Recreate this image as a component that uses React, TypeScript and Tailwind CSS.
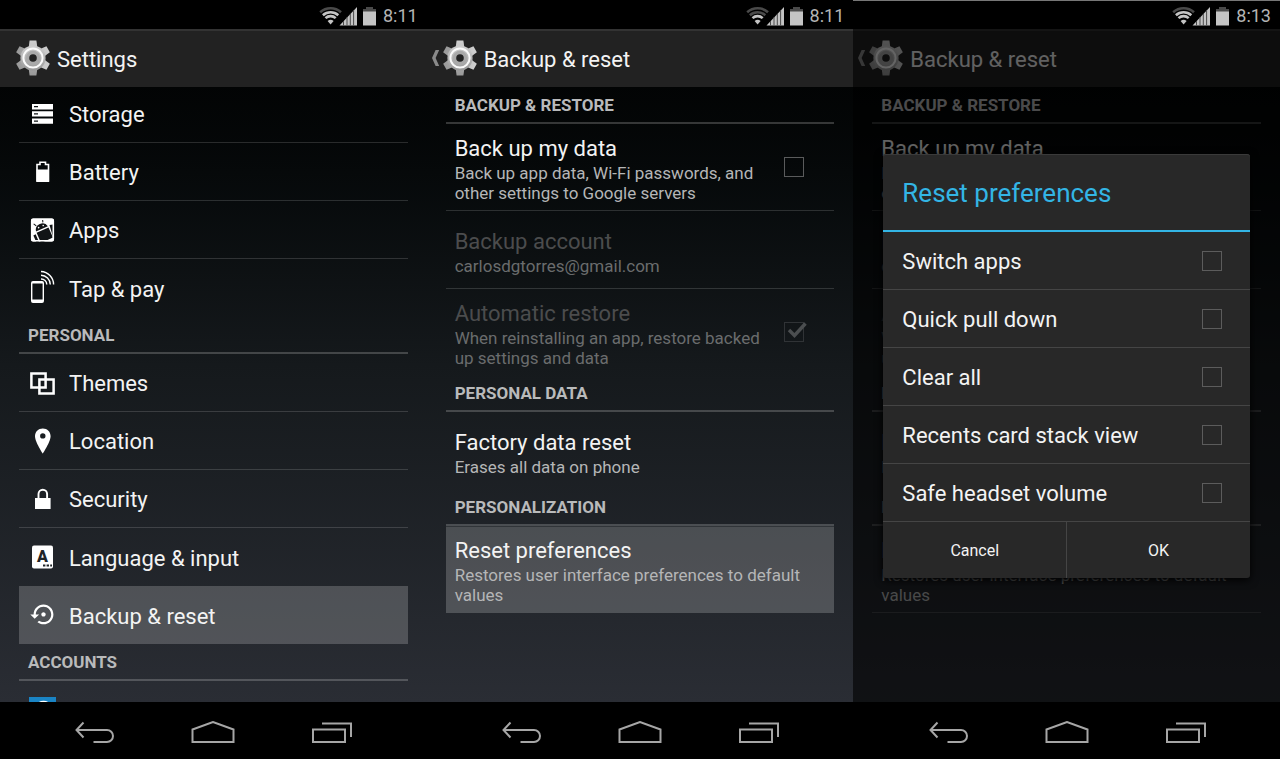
import { ReactNode } from "react";
import clsx from "clsx";

type WifiLevel = "weak" | "strong";

function StatusBar({ time, wifi }: { time: string; wifi: WifiLevel }) {
  return (
    <div className="flex h-[29px] shrink-0 items-center justify-end gap-[6px] bg-black pt-[2px] pr-[9px]">
      <svg width="58" height="20" viewBox="0 0 58 20" aria-hidden="true">
        <g fill="none" strokeWidth="2.6">
          <path d="M1.2 6.2 A15.5 15.5 0 0 1 22 6.2" stroke="#4a4a4a" />
          <path d="M3.9 9.2 A11.5 11.5 0 0 1 19.3 9.2" stroke={wifi === "strong" ? "#c4c4c4" : "#4a4a4a"} />
          <path d="M6.5 12.1 A7.6 7.6 0 0 1 16.7 12.1" stroke="#c4c4c4" />
        </g>
        <path d="M11.6 18.6 L8.6 15 A4.6 4.6 0 0 1 14.6 15 Z" fill="#c4c4c4" />
        <path d="M38 1 V19.5 H20.5 Z" fill="#c4c4c4" />
        <path d="M24.5 15 V19.5 M28 11 V19.5 M31.3 8 V19.5 M34.6 4 V19.5" stroke="#4c4c4c" strokeWidth="1" />
        <path d="M47 1 H54 V3 H57 V6 H44 V3 H47 Z" fill="#4a4a4a" />
        <path d="M44 5.5 H57 V19.5 H44 Z" fill="#c4c4c4" />
      </svg>
      <span className="text-[18px] leading-6 text-[#b4b4b4]">{time}</span>
    </div>
  );
}

function Gear() {
  return (
    <svg width="34" height="36" viewBox="-17 -18 34 36" className="shrink-0" aria-hidden="true">
      <defs>
        <linearGradient id="gearBody" x1="0" y1="0" x2="0" y2="1">
          <stop offset="0" stopColor="#cfcfcf" />
          <stop offset="1" stopColor="#999999" />
        </linearGradient>
      </defs>
      <g fill="url(#gearBody)">
        {[0, 60, 120].map((angle) => (
          <path key={angle} d="M-3.4 -17.5 H3.4 L4.4 -10 V10 L3.4 17.5 H-3.4 L-4.4 10 V-10 Z" transform={`rotate(${angle})`} />
        ))}
        <circle r="12.6" />
      </g>
      <circle r="7.2" fill="#a9a9a9" />
      <circle r="9.6" fill="none" stroke="#fafafa" strokeWidth="2" />
      <circle r="3.8" fill="#222222" />
    </svg>
  );
}

function ActionBar({ title, back }: { title: string; back?: boolean }) {
  return (
    <header className="flex h-[58px] shrink-0 items-center border-t-2 border-[#333333] bg-[#222222] pl-[4px]">
      <button type="button" aria-label="Navigate up" disabled={!back} className="flex items-center pb-[2px]">
        <span className="w-[12px]">
          {back && (
            <svg width="9" height="18" viewBox="0 0 9 18" aria-hidden="true">
              <path d="M4.6 1 H8.2 L4.6 9 L8.2 17 H4.6 L1 9 Z" fill="#8a8a8a" />
            </svg>
          )}
        </span>
        <Gear />
      </button>
      <h1 className="ml-[7px] text-[22px] text-[#f3f3f3]">{title}</h1>
    </header>
  );
}

function NavBar() {
  return (
    <nav className="flex h-[57px] shrink-0 items-center justify-center bg-black pt-[5px]">
      <button type="button" aria-label="Back" className="flex w-[120px] justify-center">
        <svg width="40" height="24" viewBox="0 0 40 24" fill="none" stroke="#a6a6a6" strokeWidth="2">
          <path d="M9.5 1.5 L2.5 9 L9.5 16.5 M3 9 H33 A6 6 0 0 1 33 21 H19.5" />
        </svg>
      </button>
      <button type="button" aria-label="Home" className="flex w-[118px] justify-center">
        <svg width="44" height="24" viewBox="0 0 44 24" fill="none" stroke="#a6a6a6" strokeWidth="2">
          <path d="M1.5 21 V8.5 L22 1 L42.5 8.5 V21 Z" />
        </svg>
      </button>
      <button type="button" aria-label="Recent apps" className="flex w-[120px] justify-center">
        <svg width="40" height="24" viewBox="0 0 40 24" fill="none" stroke="#a6a6a6" strokeWidth="2">
          <path d="M1 8.5 H33 V21 H1 Z M10 2.5 H39 V16" />
        </svg>
      </button>
    </nav>
  );
}

function SectionHeader({ children }: { children: ReactNode }) {
  return (
    <h2 className="flex h-[37px] items-center border-b-2 border-white/20 pt-[3px] pl-[9px] text-[17px] font-bold text-[#b9babb]">
      {children}
    </h2>
  );
}

const icons: Record<string, ReactNode> = {
  storage: (
    <>
      <path d="M3 4 H24 V9.4 H3 Z M3 11.2 H24 V16.6 H3 Z M3 18.4 H24 V23.8 H3 Z" />
      <path d="M5 6.7 H9 M5 13.9 H9 M5 21.1 H9" stroke="#111416" strokeWidth="1.2" />
    </>
  ),
  battery: (
    <>
      <path d="M8 23 V6.5 H11 V4.2 H16.5 V6.5 H19.5 V23 Z" fill="none" stroke="white" strokeWidth="1.6" />
      <path d="M7.5 11.5 H20 V24 H7.5 Z" />
    </>
  ),
  apps: (
    <>
      <rect x="2" y="2.5" width="23" height="23" rx="2" />
      <g transform="rotate(-24 14 14)" fill="#111416">
        <path d="M7 12.5 A6.6 6.4 0 0 1 20 12.5 Z" />
        <path d="M7 14 H20 V25 H7 Z M3 15 H5.5 V23 H3 Z" />
        <path d="M9.5 7.5 L8 4.5 M17 7 L18 4" stroke="#111416" />
        <circle cx="11" cy="10" r="0.8" fill="white" />
        <circle cx="16" cy="10" r="0.8" fill="white" />
      </g>
      <path d="M20.5 9 L24 8.5 V21 Z" fill="#111416" />
      <rect x="2.7" y="3.2" width="21.6" height="21.6" rx="1.5" fill="none" stroke="white" strokeWidth="1.6" />
    </>
  ),
  tap: (
    <>
      <path
        fillRule="evenodd"
        d="M4 7 H13 Q15 7 15 9 V27 Q15 29 13 29 H4 Q2 29 2 27 V9 Q2 7 4 7 Z M3.4 9.5 V25.5 H13.6 V9.5 Z"
      />
      <path
        d="M12 -2.5 A13 13 0 0 1 24.6 10.5 M12 1.2 A9.4 9.4 0 0 1 21.3 10.5 M12 5 A5.6 5.6 0 0 1 17.8 10.5"
        fill="none"
        stroke="white"
        strokeWidth="1.4"
      />
    </>
  ),
  themes: (
    <path d="M2.4 4.4 H16.6 V18.6 H2.4 Z M10.4 10.4 H24.6 V24.6 H10.4 Z" fill="none" stroke="white" strokeWidth="2.5" />
  ),
  location: (
    <path
      fillRule="evenodd"
      d="M13.8 1.5 C9.3 1.5 6 4.9 6 9.2 C6 14.8 13.8 26.5 13.8 26.5 C13.8 26.5 21.6 14.8 21.6 9.2 C21.6 4.9 18.3 1.5 13.8 1.5 Z M13.8 6.2 A2.7 2.7 0 1 1 13.8 11.6 A2.7 2.7 0 1 1 13.8 6.2 Z"
    />
  ),
  security: (
    <>
      <path d="M9.5 13.5 V9 A4.3 4.3 0 0 1 18.1 9 V13.5" fill="none" stroke="white" strokeWidth="1.9" />
      <path d="M6 13 H21.6 V24 H6 Z" />
    </>
  ),
  language: (
    <>
      <rect x="3" y="2.5" width="21" height="23" rx="2" />
      <text x="13.5" y="19" textAnchor="middle" fontSize="16" fontWeight="900" fill="#1f2428">
        A
      </text>
      <path d="M14 22.5 H16.4 M17.6 22.5 H20 M21.2 22.5 H23" stroke="#1f2428" strokeWidth="2" />
    </>
  ),
  backup: (
    <path
      transform="translate(1.3 .2) scale(1.1)"
      d="M14 12c0-1.1-.9-2-2-2s-2 .9-2 2 .9 2 2 2 2-.9 2-2zm-2-9c-4.97 0-9 4.03-9 9H0l4 4 4-4H5c0-3.87 3.13-7 7-7s7 3.13 7 7-3.13 7-7 7c-1.51 0-2.91-.49-4.06-1.3l-1.42 1.44C8.04 20.3 9.94 21 12 21c4.97 0 9-4.03 9-9s-4.03-9-9-9z"
    />
  ),
};

function SettingsRow({ icon, label, last, active }: { icon: string; label: string; last?: boolean; active?: boolean }) {
  return (
    <button
      type="button"
      className={clsx(
        "flex h-[58px] w-full shrink-0 items-center gap-[12px] pl-[10px] text-left text-[22px] text-[#f3f3f3]",
        active && "bg-white/20",
        !last && "border-b border-white/15",
      )}
    >
      <svg width="28" height="28" viewBox="0 0 28 28" fill="white" className="shrink-0 overflow-visible" aria-hidden="true">
        {icons[icon]}
      </svg>
      <span className="pt-[2px]">{label}</span>
    </button>
  );
}

const tickBox = "size-[20px] shrink-0 appearance-none border";

type PreferenceProps = {
  title: string;
  summary: string;
  checkbox?: "on" | "off";
  disabled?: boolean;
  active?: boolean;
  divider?: boolean;
};

function Preference({ title, summary, checkbox, disabled, active, divider }: PreferenceProps) {
  const Row = checkbox ? "label" : "button";
  return (
    <Row
      className={clsx(
        "flex w-full items-center justify-between gap-[12px] pr-[30px] pl-[9px] text-left",
        active && "bg-white/20 shadow-[inset_0_1px_#303438]",
        divider && "border-b",
        active ? "border-transparent" : "border-white/15",
      )}
    >
      <span className="flex min-h-[77px] flex-col justify-center pt-[10px] pb-[7px]">
        <span className={clsx("text-[22px] leading-[29px]", disabled ? "text-[#4b4c4d]" : "text-[#f3f3f3]")}>{title}</span>
        <span className={clsx("text-[17px] leading-[20px]", disabled ? "text-[#6a6c6d]" : "text-[#b5b6b7]")}>{summary}</span>
      </span>
      {checkbox && (
        <span className="relative flex shrink-0">
          <input
            type="checkbox"
            defaultChecked={checkbox === "on"}
            disabled={disabled}
            className={clsx(tickBox, "peer", disabled ? "border-[#303336]" : "border-[#5a5b5c]")}
          />
          <svg
            width="24"
            height="20"
            viewBox="0 0 24 20"
            className="pointer-events-none absolute top-0 left-0 hidden peer-checked:block"
            aria-hidden="true"
          >
            <path d="M5 8 L10.5 13.5 L21.5 1.5" fill="none" stroke="#4b4e50" strokeWidth="3.4" />
          </svg>
        </span>
      )}
    </Row>
  );
}

function BackupPreferences({ active }: { active?: boolean }) {
  return (
    <main className="min-h-0 flex-1 overflow-hidden px-[19px]">
      <SectionHeader>BACKUP &amp; RESTORE</SectionHeader>
      <Preference
        title="Back up my data"
        summary="Back up app data, Wi-Fi passwords, and other settings to Google servers"
        checkbox="off"
        divider
      />
      <Preference title="Backup account" summary="carlosdgtorres@gmail.com" disabled divider />
      <Preference
        title="Automatic restore"
        summary="When reinstalling an app, restore backed up settings and data"
        checkbox="on"
        disabled
      />
      <SectionHeader>PERSONAL DATA</SectionHeader>
      <Preference title="Factory data reset" summary="Erases all data on phone" />
      <SectionHeader>PERSONALIZATION</SectionHeader>
      <Preference
        title="Reset preferences"
        summary="Restores user interface preferences to default values"
        active={active}
        divider
      />
    </main>
  );
}

const RESET_OPTIONS = ["Switch apps", "Quick pull down", "Clear all", "Recents card stack view", "Safe headset volume"];

function ResetDialog() {
  return (
    <div className="absolute inset-0 flex items-center bg-black/60 px-[30px]">
      <div
        role="dialog"
        aria-labelledby="reset-title"
        className="w-full rounded-[3px] bg-[#282828] shadow-[0_2px_8px_#000000,inset_0_1px_#3a3a3a]"
      >
        <h2
          id="reset-title"
          className="flex h-[78px] items-center border-b-2 border-[#33b5e5] pt-[4px] pl-[19px] text-[26px] text-[#33b5e5]"
        >
          Reset preferences
        </h2>
        {RESET_OPTIONS.map((option) => (
          <label
            key={option}
            className="flex h-[58px] items-center justify-between border-b border-[#454545] pt-[2px] pr-[28px] pl-[19px] text-[22px] text-[#f3f3f3]"
          >
            {option}
            <input type="checkbox" className={clsx(tickBox, "border-[#5c5c5c] checked:bg-[#33b5e5]")} />
          </label>
        ))}
        <div className="flex h-[56px] text-[16px] text-[#f3f3f3]">
          <button type="button" className="flex-1 border-r border-[#454545] pt-[2px]">
            Cancel
          </button>
          <button type="button" className="flex-1 pt-[2px]">
            OK
          </button>
        </div>
      </div>
    </div>
  );
}

function Phone({ children }: { children: ReactNode }) {
  return <section className="flex min-w-0 flex-col overflow-hidden">{children}</section>;
}

const screen = "relative flex min-h-0 flex-1 flex-col bg-linear-to-b from-[#010202] via-[#15191c] to-[#2a2d34]";

export default function App() {
  return (
    <div className="grid h-screen grid-cols-3 bg-black font-[Roboto,sans-serif]">
      <Phone>
        <StatusBar time="8:11" wifi="strong" />
        <div className={screen}>
          <ActionBar title="Settings" />
          <main className="min-h-0 flex-1 overflow-hidden px-[19px]">
            <div className="-mt-[2px]">
              <SettingsRow icon="storage" label="Storage" />
              <SettingsRow icon="battery" label="Battery" />
              <SettingsRow icon="apps" label="Apps" />
              <SettingsRow icon="tap" label="Tap & pay" last />
              <SectionHeader>PERSONAL</SectionHeader>
              <SettingsRow icon="themes" label="Themes" />
              <SettingsRow icon="location" label="Location" />
              <SettingsRow icon="security" label="Security" />
              <SettingsRow icon="language" label="Language & input" last />
              <SettingsRow icon="backup" label="Backup & reset" active last />
              <SectionHeader>ACCOUNTS</SectionHeader>
              <div className="px-[10px] pt-[16px]">
                <svg width="27" height="27" viewBox="0 0 27 27" aria-hidden="true">
                  <path d="M0 0 H27 V27 H0 Z" fill="#1a84c4" />
                  <circle cx="14.5" cy="13" r="8" fill="none" stroke="white" strokeWidth="2.5" />
                </svg>
              </div>
            </div>
          </main>
        </div>
        <NavBar />
      </Phone>
      <Phone>
        <StatusBar time="8:11" wifi="weak" />
        <div className={screen}>
          <ActionBar title="Backup & reset" back />
          <BackupPreferences active />
        </div>
        <NavBar />
      </Phone>
      <Phone>
        <div className="relative shrink-0">
          <StatusBar time="8:13" wifi="strong" />
          <div className="absolute inset-x-0 top-0 h-px bg-[#777777]" />
        </div>
        <div className={screen}>
          <ActionBar title="Backup & reset" back />
          <BackupPreferences />
          <ResetDialog />
        </div>
        <NavBar />
      </Phone>
    </div>
  );
}
